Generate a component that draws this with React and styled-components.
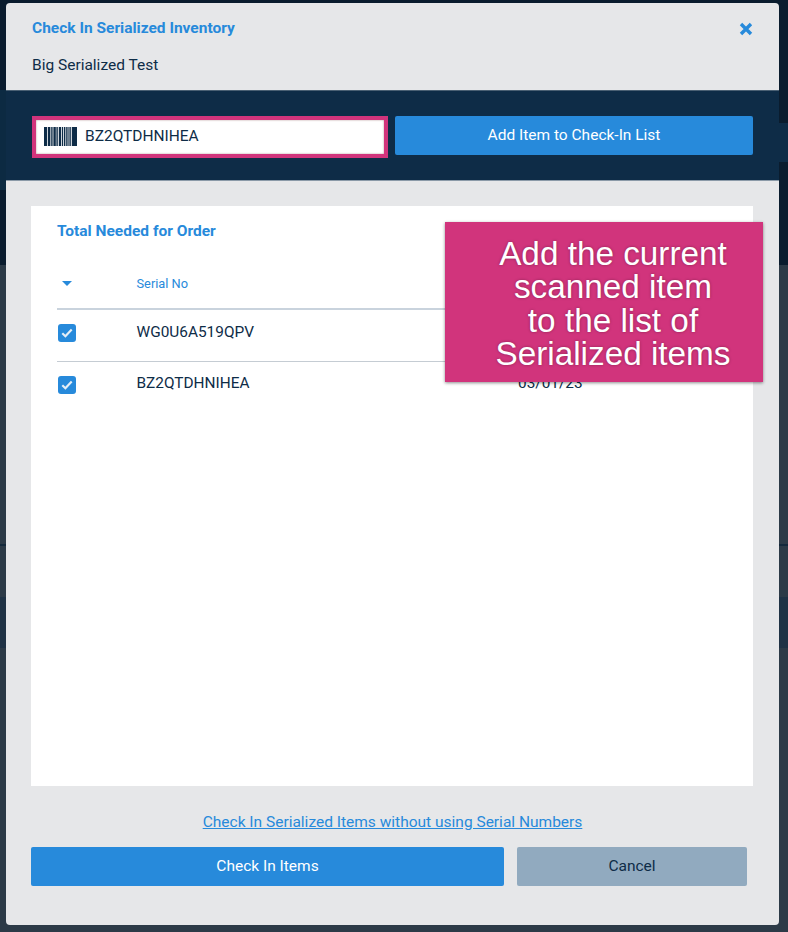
import styled, { createGlobalStyle } from 'styled-components';

const GlobalStyle = createGlobalStyle`
  html, body { margin: 0; padding: 0; }
  body { font-family: Roboto, "Liberation Sans", sans-serif; color: #0e2c47; }
`

const blue = '#278adb'
const navy = '#0e2c47'
const pink = '#d1347c'

const Page = styled.div`
  width: 788px;
  height: 932px;
  padding: 3px 9px 7px 6px;
  box-sizing: border-box;
  overflow: hidden;
  background:
    linear-gradient(#0c2a42, #0c2a42) 0 90px / 6px 100px no-repeat,
    linear-gradient(#0e2c47, #0e2c47) 779px 123px / 9px 39px no-repeat,
    linear-gradient(to bottom,
      #0a1c2e 0, #0a1c2e 265px,
      #2c3a47 265px, #2c3a47 544px,
      #14293c 544px, #14293c 546px,
      #2c3a47 546px, #2c3a47 597px,
      #1f3245 597px, #1f3245 648px,
      #2c3a47 648px);
`

const Modal = styled.div`
  height: 922px;
  background: #e6e7e9;
  border-radius: 4px;
  display: flex;
  flex-direction: column;
  overflow: hidden;
`

const Header = styled.header`
  height: 87px;
  flex: none;
  box-sizing: border-box;
  padding: 16px 26px 0;
  display: flex;
  justify-content: space-between;
`

const Title = styled.h1`
  margin: 0 0 18px;
  font-size: 15.5px;
  line-height: 18px;
  font-weight: 700;
  color: ${blue};
`

const Subtitle = styled.div`
  font-size: 15.5px;
  line-height: 20px;
  color: ${navy};
`

const CloseButton = styled.button`
  border: 0;
  padding: 0;
  background: none;
  width: 14px;
  height: 14px;
  margin: 3px 0 0;
  cursor: pointer;
  svg { display: block; }
`

const ScanBar = styled.div`
  height: 91px;
  flex: none;
  box-sizing: border-box;
  background: #0e2c47;
  border-top: 1px solid #4a6073;
  border-bottom: 1px solid #8b9aa8;
  padding: 25px 26px 0 26px;
  display: flex;
  gap: 7px;
  align-items: flex-start;
`

const ScanField = styled.div`
  width: 356px;
  height: 42px;
  box-sizing: border-box;
  border: 4px solid ${pink};
  background: #fff;
  box-shadow: inset 0 0 2px #a88;
  display: flex;
  align-items: center;
  padding: 0 0 2px 8px;
  gap: 8px;
  font-size: 15.5px;
  color: ${navy};
`

const Button = styled.button`
  height: 39px;
  border: 0;
  border-radius: 2px;
  padding: 0 0 1px;
  font-family: inherit;
  font-size: 15.5px;
  font-weight: 400;
  background: ${p => p.$secondary ? '#91aabf' : blue};
  color: ${p => p.$secondary ? navy : '#fff'};
  cursor: pointer;
`

const AddButton = styled(Button)`
  flex: 1;
`

const Panel = styled.section`
  position: relative;
  height: 580px;
  flex: none;
  margin: 25px 26px 0 25px;
  background: #fff;
  padding: 16px 26px 0;
  box-sizing: border-box;
`

const PanelTitle = styled.h2`
  margin: 0;
  font-size: 15.5px;
  line-height: 18px;
  font-weight: 700;
  color: ${blue};
`

const Row = styled.div`
  display: grid;
  grid-template-columns: 79.5px 381.5px 1fr;
  align-items: center;
  height: 52px;
  box-sizing: border-box;
  padding-bottom: 5px;
  border-bottom: 1px solid #c5ccd3;
  font-size: 15.4px;
  color: ${navy};
`

const HeadRow = styled(Row)`
  margin-top: 17px;
  padding: 2px 0 0;
  height: 53px;
  border-bottom: 2px solid #c9d3dd;
  font-size: 12.8px;
  color: ${blue};
`

const LastRow = styled(Row)`
  padding-bottom: 7px;
  border-bottom: 0;
`

const Cell = styled.span`
  padding-bottom: 3px;
`

const SortCaret = styled.span`
  display: block;
  width: 0;
  height: 0;
  border-left: 5px solid transparent;
  border-right: 5px solid transparent;
  border-top: 5px solid ${blue};
  margin-left: 5px;
`

const Checkbox = styled.span`
  display: flex;
  align-items: center;
  justify-content: center;
  width: 18px;
  height: 18px;
  margin-left: 1px;
  background: ${blue};
  border-radius: 3px;
`

const Callout = styled.aside`
  position: absolute;
  left: 414px;
  top: 16px;
  width: 318px;
  height: 160px;
  box-sizing: border-box;
  padding: 15px 0 0 18px;
  background: ${pink};
  box-shadow: 0 1px 3px rgba(0, 0, 0, 0.45);
  color: #fff;
  font-family: "Liberation Sans", Arial, sans-serif;
  font-size: 33.3px;
  line-height: 33.4px;
  text-align: center;
  text-shadow: 0 0 3px rgba(0, 0, 0, 0.35);
`

const LinkRow = styled.div`
  text-align: center;
  margin-top: 26px;
  line-height: 20px;
  font-size: 15.5px;
`

const Link = styled.a`
  color: ${blue};
  text-decoration: underline;
  cursor: pointer;
`

const Footer = styled.footer`
  display: flex;
  gap: 13px;
  margin: 15px 32px 0 25px;
`

const PrimaryButton = styled(Button)`
  width: 473px;
`

const CancelButton = styled(Button)`
  flex: 1;
`

function BarcodeIcon() {
  const bars = [[0, 3], [3.8, 2.6], [7.2, 1.4], [9.4, 2.4], [12.4, 1.4], [14.8, 2.4], [18, 1.2], [20, 1.4], [22.2, 1.4], [24.4, 1.2], [26.2, 1], [28, 5]]
  return (
    <svg width="33" height="19" viewBox="0 0 33 19">
      {bars.map(([x, w]) => <rect key={x} x={x} y="0" width={w} height="19" fill="#0e2c47" />)}
    </svg>
  )
}

function CheckMark() {
  return (
    <svg width="12" height="10" viewBox="0 0 12 10">
      <path d="M1.3 5.2 L4.4 8.2 L10.7 1.6" fill="none" stroke="#e6eef6" strokeWidth="2.2" />
    </svg>
  )
}

export default function App() {
  return (
    <>
      <GlobalStyle />
      <Page>
        <Modal>
          <Header>
            <div>
              <Title>Check In Serialized Inventory</Title>
              <Subtitle>Big Serialized Test</Subtitle>
            </div>
            <CloseButton aria-label="Close">
              <svg width="14" height="14" viewBox="0 0 14 14">
                <path d="M2 2 L12 12 M12 2 L2 12" stroke={blue} strokeWidth="3.4" fill="none" />
              </svg>
            </CloseButton>
          </Header>

          <ScanBar>
            <ScanField>
              <BarcodeIcon />
              <span>BZ2QTDHNIHEA</span>
            </ScanField>
            <AddButton>Add Item to Check-In List</AddButton>
          </ScanBar>

          <Panel>
            <PanelTitle>Total Needed for Order</PanelTitle>
            <HeadRow>
              <SortCaret />
              <span>Serial No</span>
              <span />
            </HeadRow>
            <Row>
              <Checkbox><CheckMark /></Checkbox>
              <Cell>WG0U6A519QPV</Cell>
              <Cell>03/01/23</Cell>
            </Row>
            <LastRow>
              <Checkbox><CheckMark /></Checkbox>
              <Cell>BZ2QTDHNIHEA</Cell>
              <Cell>03/01/23</Cell>
            </LastRow>
            <Callout>
              Add the current<br />
              scanned item<br />
              to the list of<br />
              Serialized items
            </Callout>
          </Panel>

          <LinkRow>
            <Link>Check In Serialized Items without using Serial Numbers</Link>
          </LinkRow>

          <Footer>
            <PrimaryButton>Check In Items</PrimaryButton>
            <CancelButton $secondary>Cancel</CancelButton>
          </Footer>
        </Modal>
      </Page>
    </>
  )
}
